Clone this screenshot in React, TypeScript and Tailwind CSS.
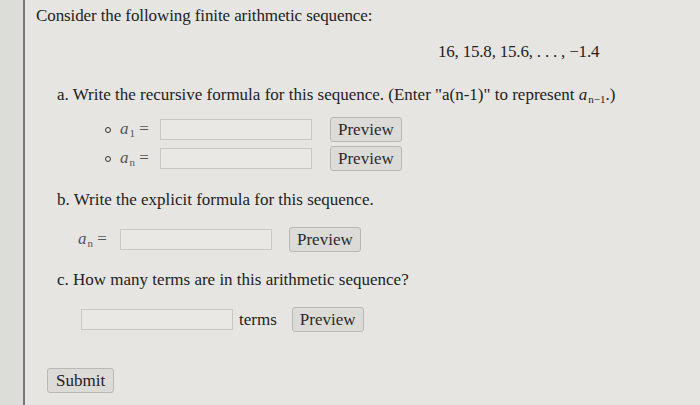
const font = { fontFamily: '"Liberation Serif", "Times New Roman", serif' };

const Field = ({ w = "w-[152px]" }: { w?: string }) => (
  <div className={`${w} h-[21px] border border-[#c9c8c4] bg-[#e9e8e5]`} />
);

const PreviewButton = () => (
  <button className="h-[25px] px-[7px] rounded-[3px] border border-[#b9b8b4] bg-[#dcdbd8] text-[17px] leading-none text-[#2a2a2a]">
    Preview
  </button>
);

const A = ({ sub }: { sub: string }) => (
  <span className="italic text-[17px]">
    a<span className="not-italic text-[11px] relative top-[3px] ml-[1px]">{sub}</span>
  </span>
);

const Bullet = () => (
  <span className="w-[17px] flex items-center">
    <span className="ml-[2px] w-[6px] h-[6px] rounded-full border border-[#333]" />
  </span>
);

export default function App() {
  return (
    <div className="w-[700px] h-[405px] bg-[#e6e5e2] flex text-[#222] leading-[22px]" style={font}>
      <div className="w-[25px] h-full bg-[#dcdcd8] border-r-2 border-[#777]" />
      <div className="flex-1 flex flex-col pl-[11px] pt-[5px]">
        <p className="text-[17px] tracking-[-0.1px]">Consider the following finite arithmetic sequence:</p>
        <p className="text-[17px] pl-[402px] mt-[14px] tracking-[-0.2px]">
          16, 15.8, 15.6, . . . , −1.4
        </p>
        <p className="text-[17px] pl-[21px] mt-[21px]">
          a. Write the recursive formula for this sequence. (Enter "a(n-1)" to represent{" "}
          <A sub="n−1" />.)
        </p>
        <div className="flex flex-col gap-[4px] mt-[10px] pl-[67px]">
          <div className="flex items-center h-[25px]">
            <Bullet />
            <span className="w-[40px] text-[#555] text-[17px]"><A sub="1" /> =</span>
            <Field />
            <span className="w-[18px]" />
            <PreviewButton />
          </div>
          <div className="flex items-center h-[25px]">
            <Bullet />
            <span className="w-[40px] text-[#555] text-[17px]"><A sub="n" /> =</span>
            <Field />
            <span className="w-[18px]" />
            <PreviewButton />
          </div>
        </div>
        <p className="text-[17px] pl-[21px] mt-[18px]">
          b. Write the explicit formula for this sequence.
        </p>
        <div className="flex items-center h-[25px] mt-[16px] pl-[42px]">
          <span className="w-[42px] text-[#555] text-[17px]"><A sub="n" /> =</span>
          <Field />
          <span className="w-[17px]" />
          <PreviewButton />
        </div>
        <p className="text-[17px] pl-[21px] mt-[17px]">
          c. How many terms are in this arithmetic sequence?
        </p>
        <div className="flex items-center h-[25px] mt-[16px] pl-[45px]">
          <Field />
          <span className="text-[17px] ml-[6px] mr-[15px]">terms</span>
          <PreviewButton />
        </div>
        <div className="mt-[36px] pl-[11px]">
          <button className="h-[25px] px-[8px] rounded-[3px] border border-[#b9b8b4] bg-[#dcdbd8] text-[17px] leading-none">
            Submit
          </button>
        </div>
      </div>
    </div>
  );
}
